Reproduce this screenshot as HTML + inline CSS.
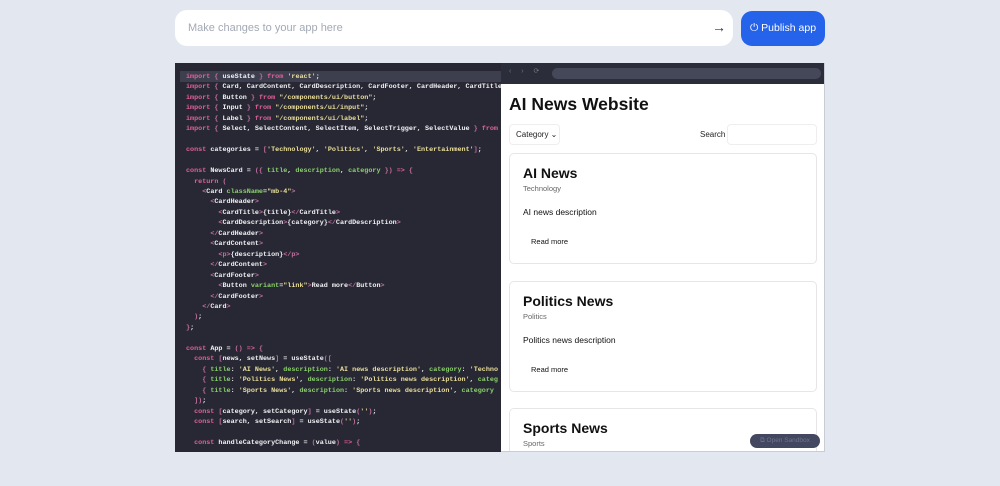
<!DOCTYPE html>
<html><head><style>
*{margin:0;padding:0;box-sizing:border-box}
html,body{width:1000px;height:486px;overflow:hidden}
body{background:#e3e7ef;font-family:"Liberation Sans",sans-serif;position:relative}
.prompt{position:absolute;left:175px;top:10px;width:558px;height:36px;background:#fff;border-radius:12px;color:#a3a9b5;font-size:11px;line-height:36px;padding-left:13px}
.prompt .arr{position:absolute;right:7px;top:-1px;color:#334;font-size:14px;line-height:36px}
.pub{position:absolute;left:741px;top:11px;width:84px;height:35px;background:#2563eb;border-radius:11px;color:#fff;font-size:10.5px;line-height:35px;text-align:center}
.code{position:absolute;left:175px;top:63px;width:326px;height:389px;background:#272833;overflow:hidden;font-family:"Liberation Mono",monospace;font-size:6.75px;line-height:10.45px;color:#f0f0f4;padding:9px 0 0 11px;white-space:pre}
.code .hl{position:absolute;left:5px;top:8px;width:321px;height:11px;background:#3d3f4f}
.code pre{position:relative;font:inherit;font-weight:bold}
.k{color:#e0609a}.s{color:#ecdf9a}.a{color:#8ad06b}.p{color:#c46fa0}
.prev{position:absolute;left:501px;top:63px;width:324px;height:389px;background:#fff;overflow:hidden;border-right:1px solid #c9ccd4;border-bottom:1px solid #c9ccd4}
.bar{height:21px;background:#2b2d3b;position:relative}
.bar .u{position:absolute;left:51px;top:5px;width:269px;height:11px;background:#454859;border-radius:6px}
.bar .n{position:absolute;left:8px;top:4px;color:#777;font-size:7px;letter-spacing:4px}
h1{position:absolute;left:8px;top:31px;font-size:17.5px;font-weight:bold;color:#111}
.sel{position:absolute;left:8px;top:61px;width:51px;height:21px;border:1px solid #eee;border-radius:4px;font-size:8px;line-height:19px;padding-left:6px;color:#222}
.sl{position:absolute;left:199px;top:67px;font-size:8px;color:#222}
.inp{position:absolute;left:226px;top:61px;width:90px;height:21px;border:1px solid #eee;border-radius:4px}
.card{position:absolute;left:8px;width:308px;height:111px;border:1px solid #e6e6e6;border-radius:5px}
.card b{position:absolute;left:13px;top:11px;font-size:14px;color:#111}
.card i{position:absolute;left:13px;top:30px;font-size:7.5px;font-style:normal;color:#666}
.card p{position:absolute;left:13px;top:53px;font-size:8.5px;color:#111}
.card span{position:absolute;left:21px;top:83px;font-size:7.5px;color:#111}
.os{position:absolute;left:750px;top:434px;width:70px;height:14px;background:#434760;border-radius:7px;color:#6f7590;font-size:6.5px;line-height:14px;text-align:center}
</style></head><body>
<div class="prompt">Make changes to your app here<span class="arr">→</span></div>
<div class="pub">⏻ Publish app</div>
<div class="code"><div class="hl"></div><pre><span class="k">import</span> <span class="p">{</span> useState <span class="p">}</span> <span class="k">from</span> <span class="s">'react'</span>;
<span class="k">import</span> <span class="p">{</span> Card, CardContent, CardDescription, CardFooter, CardHeader, CardTitle
<span class="k">import</span> <span class="p">{</span> Button <span class="p">}</span> <span class="k">from</span> <span class="s">"/components/ui/button"</span>;
<span class="k">import</span> <span class="p">{</span> Input <span class="p">}</span> <span class="k">from</span> <span class="s">"/components/ui/input"</span>;
<span class="k">import</span> <span class="p">{</span> Label <span class="p">}</span> <span class="k">from</span> <span class="s">"/components/ui/label"</span>;
<span class="k">import</span> <span class="p">{</span> Select, SelectContent, SelectItem, SelectTrigger, SelectValue <span class="p">}</span> <span class="k">from</span>

<span class="k">const</span> categories = <span class="p">[</span><span class="s">'Technology'</span>, <span class="s">'Politics'</span>, <span class="s">'Sports'</span>, <span class="s">'Entertainment'</span><span class="p">]</span>;

<span class="k">const</span> NewsCard = <span class="p">({</span> <span class="a">title</span>, <span class="a">description</span>, <span class="a">category</span> <span class="p">})</span> <span class="k">=&gt;</span> <span class="p">{</span>
  <span class="k">return</span> <span class="p">(</span>
    <span class="p">&lt;</span>Card <span class="a">className</span>=<span class="s">"mb-4"</span><span class="p">&gt;</span>
      <span class="p">&lt;</span>CardHeader<span class="p">&gt;</span>
        <span class="p">&lt;</span>CardTitle<span class="p">&gt;</span>{title}<span class="p">&lt;/</span>CardTitle<span class="p">&gt;</span>
        <span class="p">&lt;</span>CardDescription<span class="p">&gt;</span>{category}<span class="p">&lt;/</span>CardDescription<span class="p">&gt;</span>
      <span class="p">&lt;/</span>CardHeader<span class="p">&gt;</span>
      <span class="p">&lt;</span>CardContent<span class="p">&gt;</span>
        <span class="p">&lt;p&gt;</span>{description}<span class="p">&lt;/p&gt;</span>
      <span class="p">&lt;/</span>CardContent<span class="p">&gt;</span>
      <span class="p">&lt;</span>CardFooter<span class="p">&gt;</span>
        <span class="p">&lt;</span>Button <span class="a">variant</span>=<span class="s">"link"</span><span class="p">&gt;</span>Read more<span class="p">&lt;/</span>Button<span class="p">&gt;</span>
      <span class="p">&lt;/</span>CardFooter<span class="p">&gt;</span>
    <span class="p">&lt;/</span>Card<span class="p">&gt;</span>
  <span class="p">)</span>;
<span class="p">}</span>;

<span class="k">const</span> App = <span class="p">()</span> <span class="k">=&gt;</span> <span class="p">{</span>
  <span class="k">const</span> <span class="p">[</span>news, setNews<span class="p">]</span> = useState<span class="p">([</span>
    <span class="p">{</span> <span class="a">title</span>: <span class="s">'AI News'</span>, <span class="a">description</span>: <span class="s">'AI news description'</span>, <span class="a">category</span>: <span class="s">'Techno</span>
    <span class="p">{</span> <span class="a">title</span>: <span class="s">'Politics News'</span>, <span class="a">description</span>: <span class="s">'Politics news description'</span>, <span class="a">categ</span>
    <span class="p">{</span> <span class="a">title</span>: <span class="s">'Sports News'</span>, <span class="a">description</span>: <span class="s">'Sports news description'</span>, <span class="a">category</span>
  <span class="p">])</span>;
  <span class="k">const</span> <span class="p">[</span>category, setCategory<span class="p">]</span> = useState<span class="p">(</span><span class="s">''</span><span class="p">)</span>;
  <span class="k">const</span> <span class="p">[</span>search, setSearch<span class="p">]</span> = useState<span class="p">(</span><span class="s">''</span><span class="p">)</span>;

  <span class="k">const</span> handleCategoryChange = <span class="p">(</span>value<span class="p">)</span> <span class="k">=&gt;</span> <span class="p">{</span></pre></div>
<div class="prev">
<div class="bar"><span class="n">‹ › ⟳</span><div class="u"></div></div>
<h1>AI News Website</h1>
<div class="sel">Category ⌄</div>
<div class="sl">Search</div>
<div class="inp"></div>
<div class="card" style="top:90px"><b>AI News</b><i>Technology</i><p>AI news description</p><span>Read more</span></div>
<div class="card" style="top:218px"><b>Politics News</b><i>Politics</i><p>Politics news description</p><span>Read more</span></div>
<div class="card" style="top:345px;height:43px;border-bottom:none;border-radius:5px 5px 0 0"><b>Sports News</b><i>Sports</i></div>
</div>
<div class="os">⧉ Open Sandbox</div>
</body></html>
